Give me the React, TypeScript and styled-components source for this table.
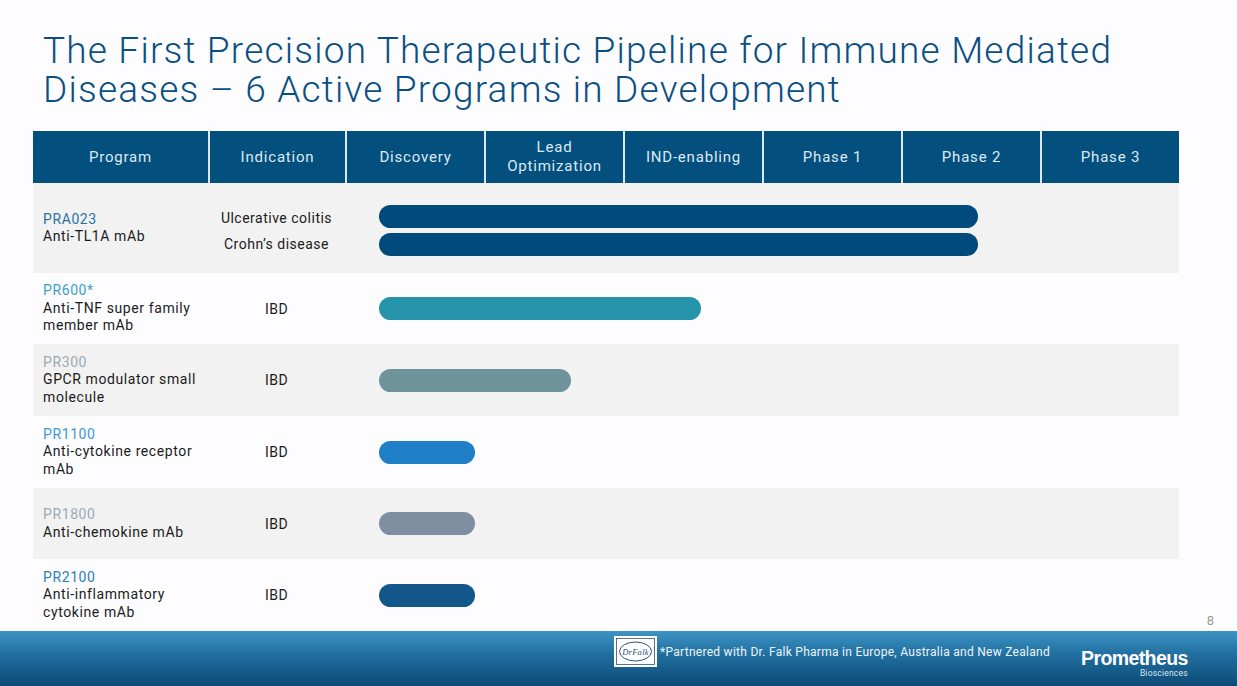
import React from 'react';
import styled, { createGlobalStyle } from 'styled-components';

const GlobalStyle = createGlobalStyle`
    html, body {
        margin: 0;
        padding: 0;
        background: #fdfdff;
    }
    * {
        box-sizing: border-box;
    }
`;

const Slide = styled.div`
    width: 1237px;
    height: 686px;
    display: flex;
    flex-direction: column;
    background: #fdfdff;
    font-family: Roboto, "Liberation Sans", sans-serif;
    overflow: hidden;
`;

const Title = styled.h1`
    margin: 0;
    padding: 31px 0 0 43px;
    height: 131px;
    font-size: 37px;
    line-height: 39px;
    font-weight: 300;
    letter-spacing: 1.2px;
    color: #0b4f82;
`;

const Body = styled.div`
    flex: 1;
    display: flex;
    padding-left: 33px;
`;

const Table = styled.div`
    width: 1146px;
    display: flex;
    flex-direction: column;
`;

const columns = '175px 135px repeat(6, 137px)';

const HeaderRow = styled.div`
    display: grid;
    grid-template-columns: ${columns};
    column-gap: 2px;
    height: 52px;
    background: #dce8f0;
`;

const HeaderCell = styled.div`
    background: #034f7e;
    color: #dde9f2;
    font-size: 15px;
    line-height: 19px;
    letter-spacing: 0.8px;
    display: flex;
    align-items: center;
    justify-content: center;
    text-align: center;
`;

const Row = styled.div<{ $shaded: boolean; $height: number }>`
    display: grid;
    grid-template-columns: 175px 137px 1fr;
    height: ${(p) => p.$height}px;
    background: ${(p) => (p.$shaded ? '#f1f2f1' : '#fdfdff')};
    align-items: center;
`;

const ProgramCell = styled.div`
    padding-left: 10px;
    font-size: 14px;
    line-height: 17.5px;
    letter-spacing: 0.6px;
    color: #1b1b1b;
`;

const Code = styled.div<{ $color: string }>`
    color: ${(p) => p.$color};
`;

const IndicationCell = styled.div<{ $offset: number }>`
    display: flex;
    flex-direction: column;
    align-items: center;
    gap: 8px;
    padding-top: ${(p) => p.$offset}px;
    font-size: 14px;
    line-height: 18px;
    letter-spacing: 0.5px;
    color: #1b1b1b;
`;

const Track = styled.div<{ $offset: number }>`
    display: flex;
    flex-direction: column;
    gap: 5px;
    padding-left: 34px;
    padding-top: ${(p) => p.$offset}px;
`;

const Bar = styled.div<{ $color: string; $width: number }>`
    width: ${(p) => p.$width}px;
    height: 23px;
    border-radius: 12px;
    background: ${(p) => p.$color};
`;

const Side = styled.div`
    flex: 1;
    display: flex;
    align-items: flex-end;
    justify-content: flex-end;
    padding: 0 23px 3px 0;
`;

const PageNumber = styled.span`
    font-size: 13px;
    color: #9a9a9a;
`;

const Footer = styled.div`
    height: 55px;
    background: linear-gradient(180deg, #3c94c4 0%, #1f6d9e 45%, #0d4b77 100%);
    display: flex;
    align-items: flex-start;
    padding: 5px 0 0 614px;
`;

const Partner = styled.div`
    display: flex;
    align-items: center;
    gap: 3px;
    color: #eef4f8;
    font-size: 12px;
    letter-spacing: 0.28px;
`;

const Brand = styled.div`
    margin-left: 31px;
    margin-top: 12px;
    display: flex;
    flex-direction: column;
    align-items: flex-end;
    color: #ffffff;
`;

const BrandName = styled.span`
    font-family: "Liberation Sans", Arial, sans-serif;
    font-weight: 700;
    font-size: 19.5px;
    line-height: 21px;
    letter-spacing: -0.6px;
`;

const BrandSub = styled.span`
    font-size: 8.5px;
    line-height: 9px;
    letter-spacing: 0.2px;
    color: #dbe6ef;
`;

const FalkLogo = () => (
    <svg width="43" height="31" viewBox="0 0 43 31">
        <rect x="0" y="0" width="43" height="31" fill="#ffffff" />
        <rect x="2.5" y="2.5" width="38" height="26" fill="none" stroke="#2a4f7c" strokeWidth="0.8" />
        <ellipse cx="21.5" cy="15.5" rx="16" ry="9.5" fill="none" stroke="#2a4f7c" strokeWidth="1" />
        <text x="21.5" y="18.5" textAnchor="middle" fontFamily="'Liberation Serif', serif" fontStyle="italic" fontSize="8.5" fill="#2a4f7c">
            DrFalk
        </text>
    </svg>
);

type Program = {
    code: string;
    codeColor: string;
    name: string[];
    indications: string[];
    bars: { color: string; width: number }[];
    height: number;
};

const programs: Program[] = [
    {
        code: 'PRA023',
        codeColor: '#2d70a6',
        name: ['Anti-TL1A mAb'],
        indications: ['Ulcerative colitis', 'Crohn’s disease'],
        bars: [
            { color: '#004b7c', width: 599 },
            { color: '#004b7c', width: 599 },
        ],
        height: 90,
    },
    {
        code: 'PR600*',
        codeColor: '#3c9fc9',
        name: ['Anti-TNF super family', 'member mAb'],
        indications: ['IBD'],
        bars: [{ color: '#2593aa', width: 322 }],
        height: 71,
    },
    {
        code: 'PR300',
        codeColor: '#9caab4',
        name: ['GPCR modulator small', 'molecule'],
        indications: ['IBD'],
        bars: [{ color: '#6e939b', width: 192 }],
        height: 72,
    },
    {
        code: 'PR1100',
        codeColor: '#3a98d6',
        name: ['Anti-cytokine receptor', 'mAb'],
        indications: ['IBD'],
        bars: [{ color: '#1f80c8', width: 96 }],
        height: 72,
    },
    {
        code: 'PR1800',
        codeColor: '#9ca9b6',
        name: ['Anti-chemokine mAb'],
        indications: ['IBD'],
        bars: [{ color: '#7f8ea0', width: 96 }],
        height: 71,
    },
    {
        code: 'PR2100',
        codeColor: '#2b7fb8',
        name: ['Anti-inflammatory', 'cytokine mAb'],
        indications: ['IBD'],
        bars: [{ color: '#13568a', width: 96 }],
        height: 72,
    },
];

const headers = ['Program', 'Indication', 'Discovery', 'Lead\nOptimization', 'IND-enabling', 'Phase 1', 'Phase 2', 'Phase 3'];

export default function App() {
    return (
        <Slide>
            <GlobalStyle />
            <Title>
                The First Precision Therapeutic Pipeline for Immune Mediated
                <br />
                Diseases – 6 Active Programs in Development
            </Title>
            <Body>
                <Table>
                    <HeaderRow>
                        {headers.map((h) => (
                            <HeaderCell key={h}>
                                {h.split('\n').map((line, i) => (
                                    <React.Fragment key={line}>
                                        {i > 0 && <br />}
                                        {line}
                                    </React.Fragment>
                                ))}
                            </HeaderCell>
                        ))}
                    </HeaderRow>
                    {programs.map((p, idx) => {
                        const offset = p.bars.length > 1 ? 5 : 0;
                        return (
                            <Row key={p.code} $shaded={idx % 2 === 0} $height={p.height}>
                                <ProgramCell>
                                    <Code $color={p.codeColor}>{p.code}</Code>
                                    {p.name.map((n) => (
                                        <div key={n}>{n}</div>
                                    ))}
                                </ProgramCell>
                                <IndicationCell $offset={offset}>
                                    {p.indications.map((ind) => (
                                        <span key={ind}>{ind}</span>
                                    ))}
                                </IndicationCell>
                                <Track $offset={offset - 1}>
                                    {p.bars.map((b, i) => (
                                        <Bar key={i} $color={b.color} $width={b.width} />
                                    ))}
                                </Track>
                            </Row>
                        );
                    })}
                </Table>
                <Side>
                    <PageNumber>8</PageNumber>
                </Side>
            </Body>
            <Footer>
                <Partner>
                    <FalkLogo />
                    <span>*Partnered with Dr. Falk Pharma in Europe, Australia and New Zealand</span>
                </Partner>
                <Brand>
                    <BrandName>Prometheus</BrandName>
                    <BrandSub>Biosciences</BrandSub>
                </Brand>
            </Footer>
        </Slide>
    );
}
